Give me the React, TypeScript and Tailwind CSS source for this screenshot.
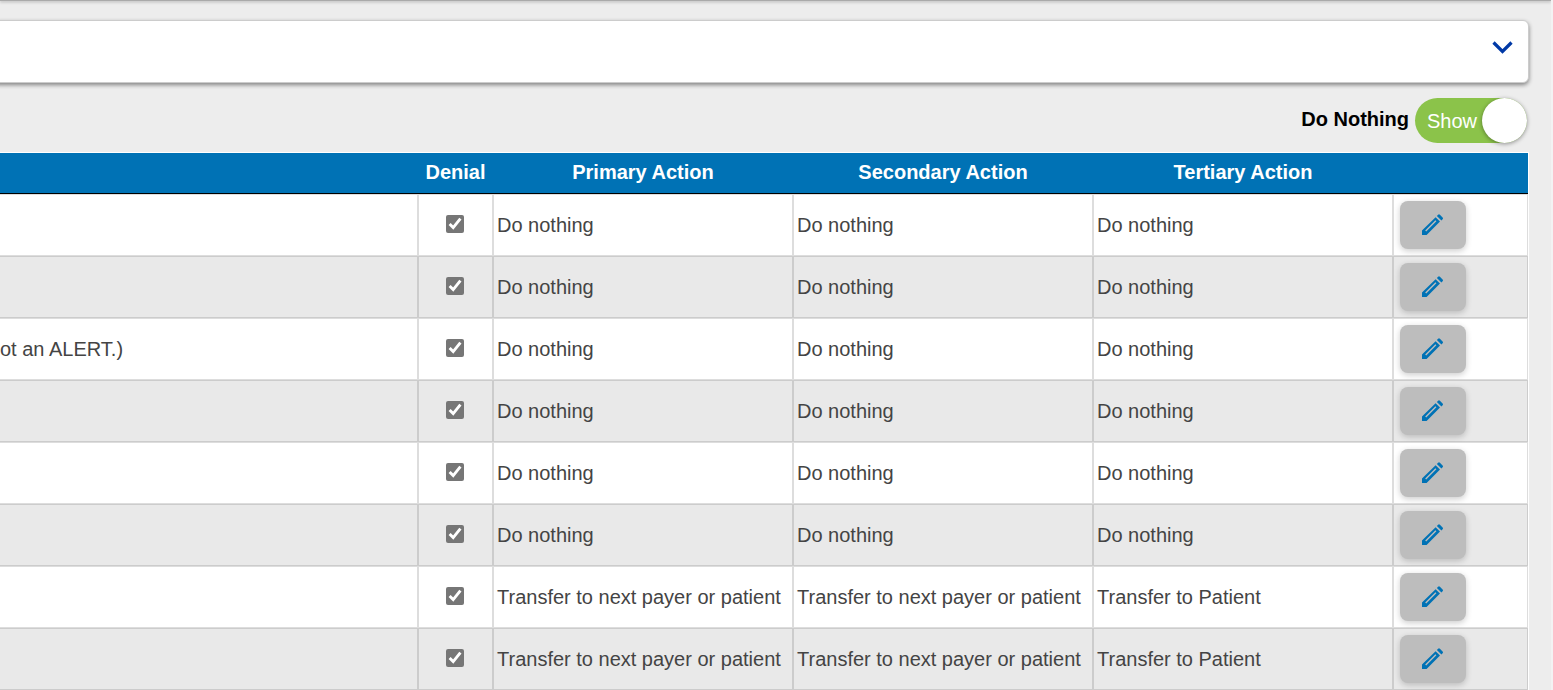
import { useState } from 'react';
import clsx from 'clsx';

interface DenialRule {
  id: number;
  description: string;
  denial: boolean;
  primary: string;
  secondary: string;
  tertiary: string;
}

const NOTHING = 'Do nothing';
const NEXT_PAYER = 'Transfer to next payer or patient';
const PATIENT = 'Transfer to Patient';

const RULES: DenialRule[] = [
  { id: 1, description: '', denial: true, primary: NOTHING, secondary: NOTHING, tertiary: NOTHING },
  { id: 2, description: '', denial: true, primary: NOTHING, secondary: NOTHING, tertiary: NOTHING },
  { id: 3, description: 'ot an ALERT.)', denial: true, primary: NOTHING, secondary: NOTHING, tertiary: NOTHING },
  { id: 4, description: '', denial: true, primary: NOTHING, secondary: NOTHING, tertiary: NOTHING },
  { id: 5, description: '', denial: true, primary: NOTHING, secondary: NOTHING, tertiary: NOTHING },
  { id: 6, description: '', denial: true, primary: NOTHING, secondary: NOTHING, tertiary: NOTHING },
  { id: 7, description: '', denial: true, primary: NEXT_PAYER, secondary: NEXT_PAYER, tertiary: PATIENT },
  { id: 8, description: '', denial: true, primary: NEXT_PAYER, secondary: NEXT_PAYER, tertiary: PATIENT },
];

function PencilIcon() {
  return (
    <svg viewBox="0 0 22 22" className="size-[22px] fill-[#0072b5]" aria-hidden="true">
      <path
        fillRule="evenodd"
        d="M0 21V16.6L13.6 3.2L18 7.6L4.6 21ZM3.2 16.4L4.2 17.4L14.4 7.3L13.4 6.3Z"
      />
      <path d="M14.9 1.9L16.1 .7Q17 -.2 17.9 .7L20.6 3.4Q21.5 4.3 20.6 5.2L19.4 6.4Z" />
    </svg>
  );
}

function ShowToggle() {
  const [show, setShow] = useState(true);

  return (
    <label className="flex cursor-pointer items-center gap-[6px]">
      <span className="pb-1 font-bold text-black">Do Nothing</span>
      <input
        type="checkbox"
        className="sr-only"
        checked={show}
        onChange={e => setShow(e.target.checked)}
      />
      <span
        className={clsx(
          'flex h-[45px] w-[112px] items-center justify-between rounded-full text-white',
          show ? 'bg-[#8bc34a] pl-3' : 'flex-row-reverse bg-[#9e9e9e] pr-3'
        )}
      >
        <span>{show ? 'Show' : 'Hide'}</span>
        <span className="size-[45px] rounded-full bg-white shadow-[0_1px_4px_rgba(0,0,0,0.4)]" />
      </span>
    </label>
  );
}

function RuleRow({ rule }: { rule: DenialRule }) {
  const [denial, setDenial] = useState(rule.denial);
  const cell = 'border border-inherit p-0 pl-[3px]';

  return (
    <tr className="h-[62px] border-[#ddd] bg-white even:border-[#ccc] even:bg-[#e9e9e9]">
      <td className="border border-l-0 border-inherit p-0">{rule.description}</td>
      <td className="border border-inherit p-0 pr-0.5 pb-0.5">
        <input
          type="checkbox"
          aria-label="Denial"
          className="mx-auto block size-[18px] accent-[#767676]"
          checked={denial}
          onChange={e => setDenial(e.target.checked)}
        />
      </td>
      <td className={cell}>{rule.primary}</td>
      <td className={cell}>{rule.secondary}</td>
      <td className={cell}>{rule.tertiary}</td>
      <td className="border border-inherit p-0 pl-[6px]">
        <button
          type="button"
          aria-label="Edit"
          className="flex h-12 w-[66px] items-center justify-center rounded-lg bg-[#bdbdbd] shadow-[0_2px_6px_rgba(0,0,0,0.2)]"
        >
          <PencilIcon />
        </button>
      </td>
    </tr>
  );
}

export default function App() {
  return (
    <div className="min-h-screen overflow-x-hidden border-r-2 border-[#f3f3f3] bg-[#ededed] font-['Liberation_Sans',Arial,sans-serif] text-[20px] leading-6 text-[#444]">
      {/* Bottom edge of the top bar */}
      <div className="h-px bg-[#aaa] shadow-[0_1px_3px_rgba(0,0,0,0.4)]" />

      <main className="pt-[19px] pr-[22px]">
        {/* Collapsed filter panel, runs off the left edge */}
        <section className="-ml-2 flex h-[63px] justify-end rounded-md border border-[#ccc] bg-white pt-[15px] pr-[14px] shadow-[0_2px_4px_rgba(0,0,0,0.45)]">
          <button type="button" aria-label="Expand filters" className="size-[22px]">
            <svg viewBox="0 0 22 22" className="size-[22px]" aria-hidden="true">
              <path d="M1.5 6.5L10.5 15.5L19.5 6.5" fill="none" stroke="#0039a6" strokeWidth="3.2" />
            </svg>
          </button>
        </section>

        <div className="mt-[15px] flex justify-end pr-0.5">
          <ShowToggle />
        </div>

        {/* Denial rules */}
        <table className="mt-[9px] w-full table-fixed border-separate border-spacing-0 border-t border-r border-white">
          <colgroup>
            <col />
            <col className="w-[75px]" />
            <col className="w-[300px]" />
            <col className="w-[300px]" />
            <col className="w-[300px]" />
            <col className="w-[135px]" />
          </colgroup>
          <thead>
            <tr className="h-[41px] bg-[#0072b5] text-white">
              <th className="border-b border-black p-0" />
              <th className="border-b border-black p-0 pb-0.5">Denial</th>
              <th className="border-b border-black p-0 pb-0.5">Primary Action</th>
              <th className="border-b border-black p-0 pb-0.5">Secondary Action</th>
              <th className="border-b border-black p-0 pb-0.5">Tertiary Action</th>
              <th className="border-b border-black p-0" />
            </tr>
          </thead>
          <tbody>
            {RULES.map(rule => (
              <RuleRow key={rule.id} rule={rule} />
            ))}
          </tbody>
        </table>
      </main>
    </div>
  );
}
